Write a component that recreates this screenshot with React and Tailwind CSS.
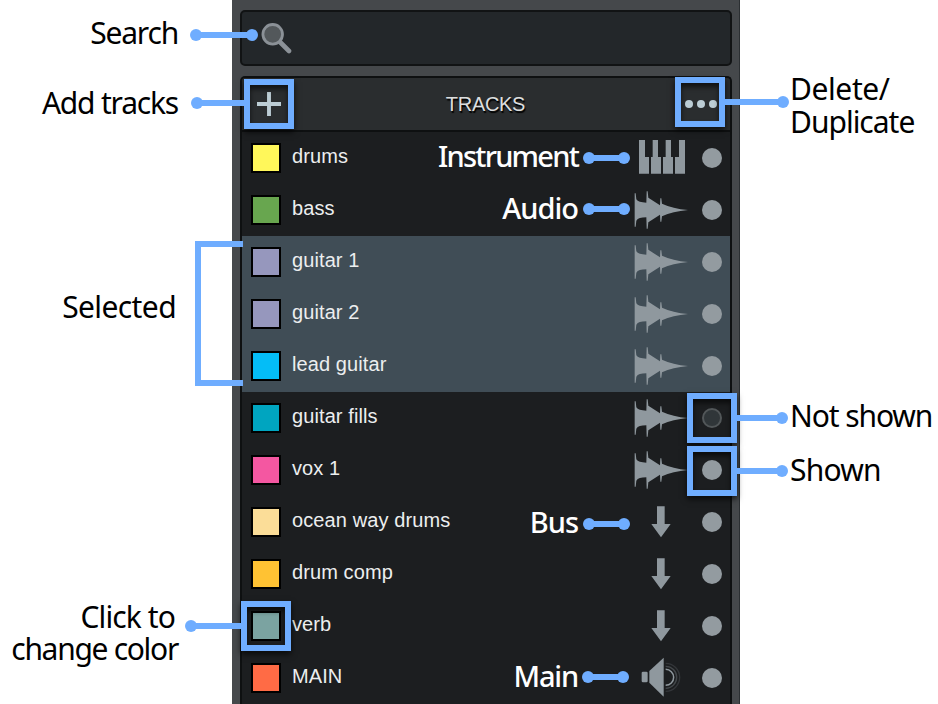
import clsx from 'clsx'

const TRACKS = [
  { name: 'drums', swatch: 'bg-[#fff75a]', type: 'keys', tag: 'Instrument', tagClass: 'tracking-[-1.75px]' },
  { name: 'bass', swatch: 'bg-[#68a64f]', type: 'wave', tag: 'Audio', tagClass: 'tracking-[-1px]', linkClass: '-mt-0.5' },
  { name: 'guitar 1', swatch: 'bg-[#9697bd]', type: 'wave', selected: true },
  { name: 'guitar 2', swatch: 'bg-[#9697bd]', type: 'wave', selected: true },
  { name: 'lead guitar', swatch: 'bg-[#04bdf7]', type: 'wave', selected: true },
  { name: 'guitar fills', swatch: 'bg-[#00a5c0]', type: 'wave', hidden: true },
  { name: 'vox 1', swatch: 'bg-[#f457a1]', type: 'wave' },
  { name: 'ocean way drums', swatch: 'bg-[#fbdd98]', type: 'bus', tag: 'Bus', tagClass: 'tracking-[-1px] pt-1', linkClass: 'mt-1' },
  { name: 'drum comp', swatch: 'bg-[#ffc233]', type: 'bus' },
  { name: 'verb', swatch: 'bg-[#7ba3a1]', type: 'bus' },
  { name: 'MAIN', swatch: 'bg-[#ff6b45]', type: 'main', tag: 'Main', tagClass: 'tracking-[-1.2px]', linkClass: '-mt-0.5 -translate-x-px' },
]

// Every track icon is drawn on a 60x52 cell at 3x units
function TrackIcon({ type }) {
  return (
    <svg viewBox="0 0 180 156" className="h-[52px] w-[60px] shrink-0 fill-[#8f989e]">
      {type === 'keys' && (
        <path d="M27 24h18v51h12v50H27zM68 24h16v51h9v50H63V75h5zM107 24h16v51h6v50H99V75h8zM147 24h18v101h-30V75h12z" />
      )}
      {type === 'wave' && (
        <path d="M14 28h3l2 18q6 10 30 10l1-34h3l2 19 35 23 1-21h3l2 16q32 15 78 19-46 4-78 19l-2 16h-3l-1-21-35 23-2 19h-3l-1-34q-24 0-30 10l-2 18h-3z" />
      )}
      {type === 'bus' && <path d="M81 31h23v53h18L93 124 64 84h17z" />}
      {type === 'main' && (
        <>
          <rect x="35" y="59" width="18" height="32" rx="4" />
          <path d="M58 57 101 17v117L58 92z" />
          <g fill="none" stroke="#8f989e">
            <path d="M107 52a24 24 0 0 1 0 48" strokeWidth="4.5" />
            <path d="M107 43a33 33 0 0 1 0 66" strokeWidth="4" opacity="0.35" />
            <path d="M107 34a42 42 0 0 1 0 84" strokeWidth="4" opacity="0.2" />
          </g>
        </>
      )}
    </svg>
  )
}

function Link({ className }) {
  return (
    <span className={clsx('relative flex h-3 w-[47px] shrink-0 items-center justify-between', className)}>
      <i className="absolute inset-x-1 h-1.5 bg-[#6fadff]" />
      <i className="size-3 rounded-full bg-[#6fadff]" />
      <i className="size-3 rounded-full bg-[#6fadff]" />
    </span>
  )
}

function TrackRow({ track }) {
  return (
    <li className={clsx('flex h-[52px] shrink-0 items-center pl-[9px]', track.selected && 'bg-[#404d56]')}>
      <span className={clsx('size-[30px] border-2 border-black', track.swatch)} />
      <span className="-mt-1 ml-[11px] text-[20px] tracking-[0.1px] text-[#eceeef]">{track.name}</span>
      <span className="ml-auto flex items-center">
        {track.tag && (
          <>
            <span className={clsx("-mt-1 mr-[5px] font-['Noto_Sans',sans-serif] text-[29px] leading-8 font-medium text-white", track.tagClass)}>
              {track.tag}
            </span>
            <Link className={track.linkClass} />
          </>
        )}
        <TrackIcon type={track.type} />
        <span
          className={clsx(
            'mr-2 ml-3 size-5 rounded-full',
            track.hidden ? 'border-2 border-[#525759] bg-[#303639]' : 'bg-[#939ba0]',
          )}
        />
      </span>
    </li>
  )
}

function Highlight({ className }) {
  return <div className={clsx('absolute size-[50px] border-6 border-[#6fadff] shadow-[0_3px_6px_rgba(0,0,0,0.7),inset_0_4px_5px_rgba(0,0,0,0.6)]', className)} />
}

function Lead({ className, both, flip }) {
  return (
    <div className={clsx('absolute flex h-3 items-center', flip && 'flex-row-reverse', both && 'justify-between', className)}>
      <i className="absolute inset-x-1 h-1.5 bg-[#6fadff]" />
      <i className="size-3 rounded-full bg-[#6fadff]" />
      {both && <i className="size-3 rounded-full bg-[#6fadff]" />}
    </div>
  )
}

export default function App() {
  return (
    <div className="relative flex h-[704px] w-[938px] overflow-hidden bg-white font-['Liberation_Sans',sans-serif]">
      <aside className="flex w-[232px] shrink-0 flex-col items-end pt-[17px] pr-[54px] text-right font-['Noto_Sans',sans-serif] text-[30px] leading-8 whitespace-nowrap text-black">
        <p className="tracking-[-1.2px]">Search</p>
        <p className="mt-[38px] tracking-[-1.2px]">Add tracks</p>
        <p className="mt-[172px] mr-0.5 tracking-[-0.6px]">Selected</p>
        <p className="mt-[278px] tracking-[-1.3px]">
          <span className="mr-[3px] tracking-[-0.9px]">Click to</span>
          <br />
          change color
        </p>
      </aside>

      <main className="flex w-[508px] shrink-0 flex-col gap-2.5 border-r border-[#2b2f32] bg-[#45484b] pt-2.5 pr-[7px] pl-2">
        <div className="flex h-14 shrink-0 items-center rounded-[5px] border-2 border-[#111314] bg-[#23272a] pl-[18px]">
          <svg viewBox="0 0 32 32" className="size-8">
            <path d="m20 20 9 9" stroke="#8b9197" strokeWidth="4.6" strokeLinecap="round" />
            <circle cx="12.7" cy="12.3" r="9.8" fill="#53585b" stroke="#8b9197" strokeWidth="2.8" />
          </svg>
        </div>

        <section className="flex min-h-0 flex-1 flex-col overflow-hidden rounded-t-[5px] border-2 border-b-0 border-[#0e1011] bg-[#1c1e20]">
          <header className="flex h-[54px] shrink-0 items-center justify-between border-b-2 border-[#0e1011] bg-[#2a2d2f] pr-[13px] pl-[15px]">
            <svg viewBox="0 0 24 24" className="size-6 stroke-[#bccdd5] stroke-[3.9]">
              <path d="M0 12h24M12 0v24" />
            </svg>
            <h1 className="ml-[5px] text-[20px] tracking-[-0.3px] text-[#dcdedf] [text-shadow:1px_2px_1px_#000]">TRACKS</h1>
            <svg viewBox="0 0 32 8" className="h-2 w-8 fill-[#bccdd5]">
              <circle cx="4" cy="4" r="4" />
              <circle cx="16" cy="4" r="4" />
              <circle cx="28" cy="4" r="4" />
            </svg>
          </header>
          <ul className="flex flex-col">
            {TRACKS.map(t => (
              <TrackRow key={t.name} track={t} />
            ))}
          </ul>
        </section>
      </main>

      <aside className="flex flex-1 flex-col items-start pt-[72px] pl-[50px] font-['Noto_Sans',sans-serif] text-[30px] leading-[33px] whitespace-nowrap text-black">
        <p className="tracking-[-1px]">
          <span className="tracking-[-0.4px]">Delete/</span>
          <br />
          Duplicate
        </p>
        <p className="mt-[261px] tracking-[-1.1px]">Not shown</p>
        <p className="mt-[21px] tracking-[-0.8px]">Shown</p>
      </aside>

      {/* Callouts over the panel */}
      <Highlight className="top-[79px] left-[244px]" />
      <Highlight className="top-[77px] left-[675px]" />
      <Highlight className="top-[393px] left-[687px]" />
      <Highlight className="top-[446px] left-[687px]" />
      <Highlight className="top-[601px] left-[241px]" />
      <Lead both className="top-[29px] left-[190px] w-[68px]" />
      <Lead className="top-[97px] left-[191px] w-[59px]" />
      <Lead flip className="top-[96px] left-[720px] w-[69px]" />
      <Lead flip className="top-[412px] left-[732px] w-[56px]" />
      <Lead flip className="top-[465px] left-[732px] w-[56px]" />
      <Lead className="top-[620px] left-[185px] w-[61px]" />
      <div className="absolute top-[241px] left-[195px] h-[145px] w-12 border-6 border-r-0 border-[#6fadff]" />
    </div>
  )
}
